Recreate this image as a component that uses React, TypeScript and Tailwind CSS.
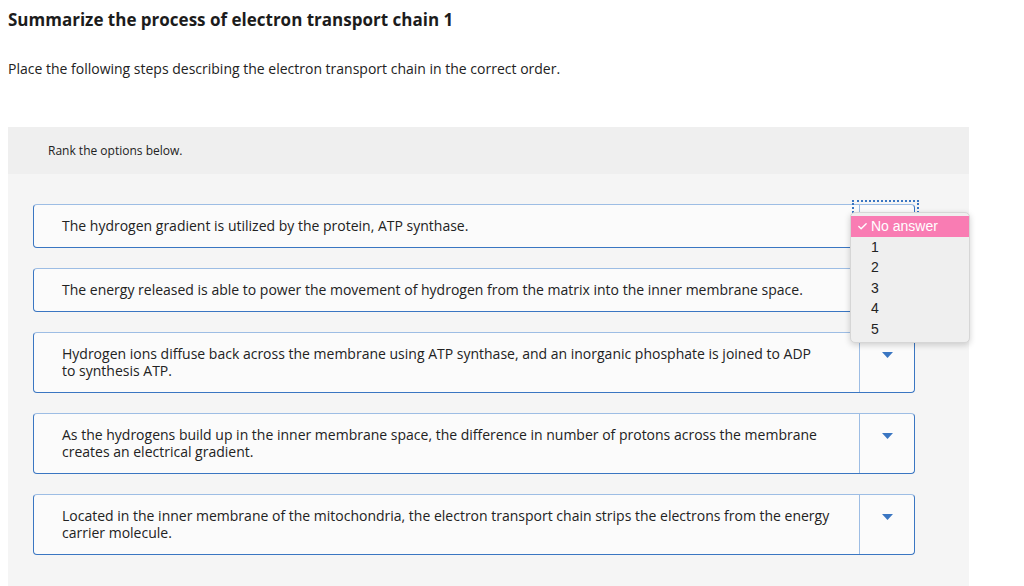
import { Check } from 'lucide-react';

const steps = [
  ['The hydrogen gradient is utilized by the protein, ATP synthase.'],
  ['The energy released is able to power the movement of hydrogen from the matrix into the inner membrane space.'],
  [
    'Hydrogen ions diffuse back across the membrane using ATP synthase, and an inorganic phosphate is joined to ADP',
    'to synthesis ATP.',
  ],
  [
    'As the hydrogens build up in the inner membrane space, the difference in number of protons across the membrane',
    'creates an electrical gradient.',
  ],
  [
    'Located in the inner membrane of the mitochondria, the electron transport chain strips the electrons from the energy',
    'carrier molecule.',
  ],
];

function Arrow() {
  return (
    <svg width="11" height="6" viewBox="0 0 11 6" className="block">
      <path d="M0 0 H11 L5.5 6 Z" fill="#3a76c2" />
    </svg>
  );
}

function StepRow({ lines }: { lines: string[] }) {
  return (
    <div className="flex min-h-[44px] rounded-[4px] border border-[#3a76c2] border-t-[#9dbde4] bg-[#fbfbfb]">
      <div className="flex flex-1 flex-col justify-center pb-[13px] pl-[28px] pt-[12px] leading-[17px]">
        {lines.map((l) => (
          <span key={l} className="whitespace-nowrap">
            {l}
          </span>
        ))}
      </div>
      <div className="flex w-[55px] justify-center border-l border-[#9dbde4] pt-[19px]">
        <Arrow />
      </div>
    </div>
  );
}

function Menu() {
  return (
    <div className="absolute left-[842px] top-[38px] w-[120px] rounded-[5px] border border-[#d6d6d6] bg-[#efefef] py-[3px] font-['Liberation_Sans',sans-serif] text-[14px] leading-[20.5px] text-[#222] shadow-[0_2px_6px_rgba(0,0,0,0.18)]">
      <div className="flex items-center bg-[#f97cb3] text-white">
        <span className="flex w-[19px] justify-end pr-[2px]">
          <Check size={11} strokeWidth={3} />
        </span>
        <span className="pl-[1px]">No answer</span>
      </div>
      {[1, 2, 3, 4, 5].map((n) => (
        <div key={n} className="pl-[20px]">
          {n}
        </div>
      ))}
    </div>
  );
}

export default function App() {
  return (
    <div className="min-h-[586px] bg-white font-['Open_Sans',sans-serif] text-[#222]">
      <div className="px-2 pt-[8px]">
        <h1 className="text-[17px] font-bold leading-[24px] text-[#1c1c1c]">
          Summarize the process of electron transport chain 1
        </h1>
        <p className="mt-[27px] text-[14px] leading-[20px]">
          Place the following steps describing the electron transport chain in the correct order.
        </p>
        <div className="mt-[48px] w-[961px] bg-[#f5f5f5]">
          <div className="flex h-[47px] items-center bg-[#efefef] pl-[40px] text-[12px]">
            Rank the options below.
          </div>
          <div className="relative pb-[32px] pl-[25px] pr-[54px] pt-[30px] text-[14px]">
            <div className="flex flex-col gap-5">
              {steps.map((s) => (
                <StepRow key={s[0]} lines={s} />
              ))}
            </div>
            <div className="absolute left-[844px] top-[26px] h-[20px] w-[67px] border-2 border-dotted border-[#3a76c2]" />
            <Menu />
          </div>
        </div>
      </div>
    </div>
  );
}
